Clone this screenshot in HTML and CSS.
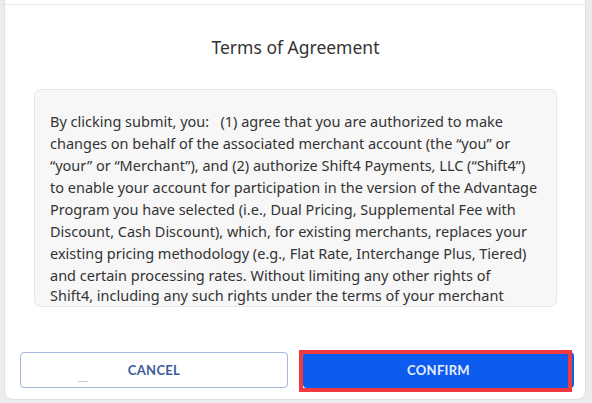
FILE: index.html
```html
<!DOCTYPE html>
<html lang="en">
<head>
<meta charset="utf-8">
<title>Terms of Agreement</title>
<link rel="stylesheet" href="styles.css">
</head>
<body>
<div class="modal">
  <div class="modal-top"></div>
  <div class="modal-body">
    <h2 class="title">Terms of Agreement</h2>
    <div class="terms">
      <span class="line">By clicking submit, you:&nbsp;&nbsp; (1) agree that you are authorized to make</span>
      <span class="line">changes on behalf of the associated merchant account (the “you” or</span>
      <span class="line">“your” or “Merchant”), and (2) authorize Shift4 Payments, LLC (“Shift4”)</span>
      <span class="line">to enable your account for participation in the version of the Advantage</span>
      <span class="line">Program you have selected (i.e., Dual Pricing, Supplemental Fee with</span>
      <span class="line">Discount, Cash Discount), which, for existing merchants, replaces your</span>
      <span class="line">existing pricing methodology (e.g., Flat Rate, Interchange Plus, Tiered)</span>
      <span class="line">and certain processing rates. Without limiting any other rights of</span>
      <span class="line line-last">Shift4, including any such rights under the terms of your merchant</span>
    </div>
  </div>
  <div class="modal-footer">
    <button class="btn btn-cancel" type="button">CANCEL<span class="artifact"></span></button>
    <div class="confirm-wrap">
      <button class="btn btn-confirm" type="button">CONFIRM</button>
      <span class="highlight"></span>
    </div>
  </div>
</div>
</body>
</html>
```

FILE: styles.css
```css
html, body {
  margin: 0;
  padding: 0;
}
body {
  background: #ececec;
  font-family: "Noto Sans", "Open Sans", "Liberation Sans", sans-serif;
  color: #333;
  width: 592px;
  height: 403px;
  overflow: hidden;
}
.modal {
  box-sizing: border-box;
  width: 582px;
  height: 400px;
  margin-left: 4px;
  background: #fff;
  border: 1px solid #e0e0e0;
  border-top: none;
  border-radius: 0 0 9px 9px;
  display: flex;
  flex-direction: column;
}
.modal-top {
  height: 4px;
  border-bottom: 1px solid #e6e6e6;
}
.modal-body {
  padding: 30px 28px 0 29px;
  display: flex;
  flex-direction: column;
}
.title {
  margin: 0;
  font-weight: 400;
  font-size: 17.5px;
  line-height: 24px;
  text-align: center;
  color: #333;
}
.terms {
  box-sizing: border-box;
  margin-top: 30px;
  height: 218px;
  overflow: hidden;
  background: #f7f7f7;
  border: 1px solid #e6e6e6;
  border-radius: 7px;
  padding: 20px 8px 0 15px;
  font-size: 14.5px;
  line-height: 22px;
  color: #333;
}
.line {
  display: block;
  white-space: nowrap;
}
.line-last {
  line-height: 19px;
}
.modal-footer {
  display: flex;
  gap: 15px;
  padding: 45px 11px 0 15px;
}
.btn {
  box-sizing: border-box;
  height: 36px;
  font-family: Lato, "Noto Sans", sans-serif;
  font-size: 13px;
  font-weight: 700;
  letter-spacing: 0.3px;
  border-radius: 4px;
  cursor: pointer;
}
.btn-cancel {
  position: relative;
  width: 268px;
  background: #fff;
  border: 1.5px solid #a7b6dc;
  color: #3d5c9c;
}
.artifact {
  position: absolute;
  left: 57px;
  bottom: 5px;
  width: 10px;
  height: 1px;
  background: #c8c8c8;
}
.confirm-wrap {
  position: relative;
  width: 271px;
}
.btn-confirm {
  width: 100%;
  background: #0c5cf0;
  border: none;
  color: #e6edff;
}
.highlight {
  position: absolute;
  left: -4px;
  top: -2px;
  width: 273px;
  height: 42px;
  box-sizing: border-box;
  border: 4px solid #f0393f;
  pointer-events: none;
}
```
